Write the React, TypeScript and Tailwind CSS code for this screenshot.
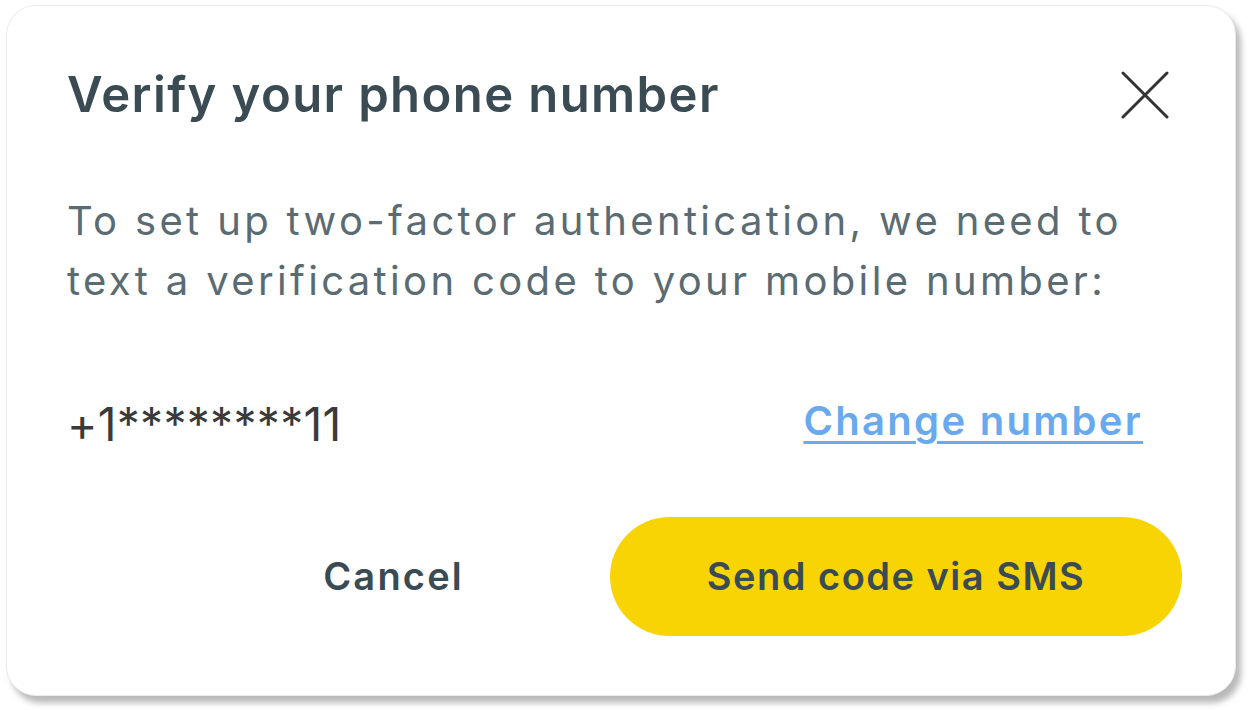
export default function App() {
  return (
    <div className="w-[1250px] h-[710px] bg-white pt-[5px] pl-[6px] font-['Inter',sans-serif]">
      <div className="w-[1230px] h-[691px] rounded-[30px] bg-white border border-[#ececec] shadow-[5px_7px_6px_rgba(0,0,0,0.28)] flex flex-col pl-[60px]">
        {/* header */}
        <div className="flex items-center justify-between mt-[61px] pr-[66px]">
          <h1 className="text-[49px] leading-[56px] font-semibold text-[#3a4b53] tracking-[1.4px]">
            Verify your phone number
          </h1>
          <button className="w-[48px] h-[48px] flex items-center justify-center">
            <svg width="48" height="48" viewBox="0 0 48 48" fill="none" stroke="#333" strokeWidth="3" strokeLinecap="round">
              <path d="M2 2 L46 46 M46 2 L2 46" />
            </svg>
          </button>
        </div>

        <p className="mt-[68px] text-[40px] leading-[60px] text-[#5a6b72] tracking-[3.35px]">
          To set up two-factor authentication, we need to
          <br />
          text a verification code to your mobile number:
        </p>

        <div className="flex items-start justify-between mt-[88px] pr-[92px]">
          <span className="text-[46px] leading-[50px] text-[#3a3a3a] tracking-[0.3px]">+1********11</span>
          <a href="#" className="text-[40px] leading-[44px] font-semibold text-[#69a9ee] underline underline-offset-[6px] decoration-[3px] tracking-[2.3px]">
            Change number
          </a>
        </div>

        <div className="flex items-center justify-end mt-[68px] pr-[53px]">
          <button className="text-[38px] font-semibold text-[#3a4b53] tracking-[2.2px] mr-[146px]">Cancel</button>
          <button className="w-[572px] h-[119px] rounded-full bg-[#f9d404] text-[38px] font-semibold text-[#3a4b53] tracking-[1.5px]">
            Send code via SMS
          </button>
        </div>
      </div>
    </div>
  );
}
